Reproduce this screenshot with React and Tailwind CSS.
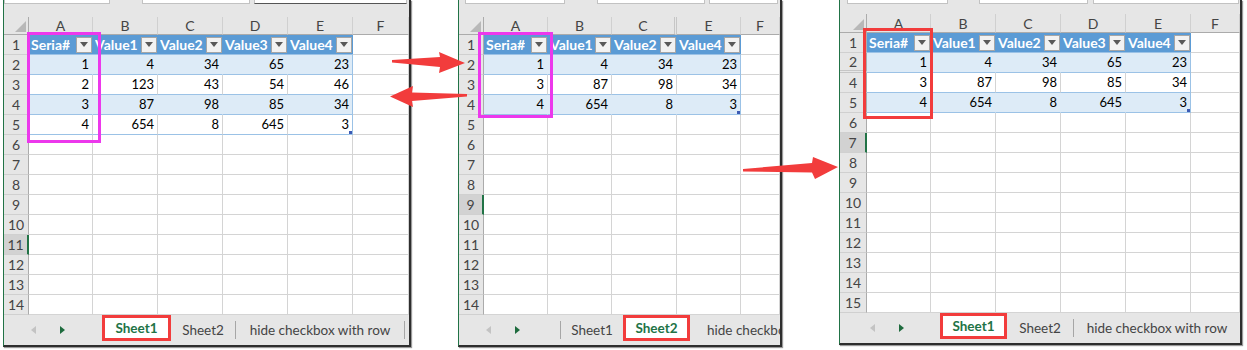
import React from 'react';

const P1 = {
  rh: 'w-[25px]',
  cols: [
    { l: 'A', w: 'w-[64px]' },
    { l: 'B', w: 'w-[65px]' },
    { l: 'C', w: 'w-[65px]' },
    { l: 'D', w: 'w-[65px]' },
    { l: 'E', w: 'w-[65px]' },
    { l: 'F', w: 'flex-1' },
  ],
  heads: ['Seria#', 'Value1', 'Value2', 'Value3', 'Value4'],
  data: [
    [1, 4, 34, 65, 23],
    [2, 123, 43, 54, 46],
    [3, 87, 98, 85, 34],
    [4, 654, 8, 645, 3],
  ],
  rows: [1, 2, 3, 4, 5, 6, 7, 8, 9, 10, 11, 12, 13, 14],
  active: 11,
};

const P2 = {
  rh: 'w-[25px]',
  cols: [
    { l: 'A', w: 'w-[64px]' },
    { l: 'B', w: 'w-[64px]' },
    { l: 'C', w: 'w-[65px]', hid: true },
    { l: 'E', w: 'w-[64px]' },
    { l: 'F', w: 'flex-1' },
  ],
  heads: ['Seria#', 'Value1', 'Value2', 'Value4'],
  data: [
    [1, 4, 34, 23],
    [3, 87, 98, 34],
    [4, 654, 8, 3],
  ],
  rows: [1, 2, 3, 4, 5, 6, 7, 8, 9, 10, 11, 12, 13, 14],
  active: 9,
};

const P3 = {
  rh: 'w-[27px]',
  cols: [
    { l: 'A', w: 'w-[64px]' },
    { l: 'B', w: 'w-[65px]' },
    { l: 'C', w: 'w-[65px]' },
    { l: 'D', w: 'w-[65px]' },
    { l: 'E', w: 'w-[65px]' },
    { l: 'F', w: 'flex-1' },
  ],
  heads: ['Seria#', 'Value1', 'Value2', 'Value3', 'Value4'],
  data: [
    [1, 4, 34, 65, 23],
    [3, 87, 98, 85, 34],
    [4, 654, 8, 645, 3],
  ],
  rows: [1, 2, 4, 5, 6, 7, 8, 9, 10, 11, 12, 13, 14, 15],
  active: 7,
  hiddenAfter: 2,
};

const Filter = () => (
  <span className="mr-[1px] ml-auto flex h-[16px] w-[16px] shrink-0 items-center justify-center border border-[#a6a6a6] bg-[#f2f2f2]">
    <svg width="8" height="5" viewBox="0 0 8 5">
      <path d="M0 0h8L4 5z" fill="#595959" />
    </svg>
  </span>
);

const Corner = ({ w, h }) => (
  <div className={`relative shrink-0 border-r border-b border-[#ababab] bg-[#e6e6e6] ${w} ${h}`}>
    <svg className="absolute right-[2px] bottom-[2px]" width="11" height="11" viewBox="0 0 11 11">
      <path d="M11 0V11H0z" fill="#b8b8b8" />
    </svg>
  </div>
);

const Sheet = ({ p, headH }) => (
  <div className="flex flex-col">
    {/* column letters */}
    <div className={`flex ${headH}`}>
      <Corner w={p.rh} h={headH} />
      {p.cols.map((c) => (
        <div
          key={c.l}
          className={`flex items-center justify-center border-b border-[#ababab] bg-[#e6e6e6] text-[14px] text-[#444] ${c.w} ${
            c.hid ? 'border-r-[3px] border-r-[#c6c6c6] border-double' : 'border-r border-r-[#d0d0d0]'
          }`}
        >
          {c.l}
        </div>
      ))}
    </div>
    {p.rows.map((n, i) => {
      const head = i === 0;
      const rec = i >= 1 && i <= p.data.length ? p.data[i - 1] : null;
      const band = rec && i % 2 === 1;
      const last = i === p.data.length;
      return (
        <div key={n} className="flex h-[20px]">
          <div
            className={`flex shrink-0 items-center justify-center text-[14px] text-[#444] ${p.rh} ${
              n === p.active
                ? 'border-r-2 border-r-[#217346] bg-[#d2d2d2]'
                : 'border-r border-r-[#ababab] bg-[#e6e6e6]'
            } ${
              p.hiddenAfter === n ? 'border-b-[3px] border-double border-b-[#c6c6c6]' : 'border-b border-b-[#d0d0d0]'
            }`}
          >
            {n}
          </div>
          {p.cols.map((c, j) => {
            const inTable = j < p.heads.length && (head || rec);
            if (head && inTable) {
              return (
                <div
                  key={c.l}
                  className={`flex min-w-0 items-center border-b border-b-[#9bc2e6] bg-[#5b9bd5] pl-[2px] text-[14px] font-bold text-white ${c.w}`}
                >
                  <span className="min-w-0 overflow-hidden whitespace-nowrap">{p.heads[j]}</span>
                  <Filter />
                </div>
              );
            }
            if (inTable) {
              const lastCol = j === p.heads.length - 1;
              return (
                <div
                  key={c.l}
                  className={`relative flex items-center justify-end border-b border-b-[#9bc2e6] pr-[3px] text-[13px] text-black ${c.w} ${
                    band ? 'bg-[#ddebf7]' : 'bg-white'
                  } ${
                    lastCol
                      ? 'border-r border-r-[#9bc2e6]'
                      : band
                        ? 'border-r border-r-[#ddebf7]'
                        : 'border-r border-r-[#d4d4d4]'
                  }`}
                >
                  {rec[j]}
                  {last && lastCol && (
                    <span className="absolute right-0 bottom-0 h-[3px] w-[3px] bg-[#3c5ab4]" />
                  )}
                </div>
              );
            }
            return (
              <div key={c.l} className={`border-r border-b border-[#d4d4d4] bg-white ${c.w}`} />
            );
          })}
        </div>
      );
    })}
  </div>
);

const Nav = ({ w, pl }) => (
  <div className={`flex shrink-0 items-center gap-[24px] ${w} ${pl}`}>
    <svg width="5" height="8" viewBox="0 0 5 8">
      <path d="M5 0V8L0 4z" fill="#c3c3c3" />
    </svg>
    <svg width="5" height="8" viewBox="0 0 5 8">
      <path d="M0 0V8L5 4z" fill="#1e6b3e" />
    </svg>
  </div>
);

const Active = ({ w, children }) => (
  <div
    className={`flex h-[26px] shrink-0 items-center justify-center self-start border-[3px] border-[#f23c3c] bg-white text-[13.5px] font-bold text-[#217346] ${w}`}
  >
    {children}
  </div>
);

const Tab = ({ w, children }) => (
  <div className={`flex shrink-0 items-center justify-center whitespace-nowrap text-[13.5px] text-[#444] ${w}`}>
    {children}
  </div>
);

const Sep = () => <div className="h-[18px] w-px shrink-0 bg-[#a6a6a6]" />;

const TopStrip = ({ h, children }) => (
  <div className={`flex items-start overflow-hidden bg-[#e6e6e6] ${h}`}>{children}</div>
);

const Box = ({ cls }) => <div className={`h-[4px] shrink-0 border-x border-b border-[#c2c2c2] bg-white ${cls}`} />;

export default function App() {
  return (
    <div className="relative flex h-[350px] w-[1247px] items-start overflow-hidden bg-white [font-family:Lato,sans-serif]">
      {/* panel 1 */}
      <div className="relative ml-[3px] flex w-[408px] shrink-0 flex-col border-b-2 border-l border-r-2 border-b-[#2e2e2e] border-l-[#217346] border-r-[#2e2e2e] shadow-[1px_1px_1px_#9a9a9a]">
        <TopStrip h="h-[17px]">
          <Box cls="w-[106px]" />
          <Box cls="ml-[32px] w-[108px]" />
          <Box cls="ml-[4px] w-[153px] border-b-[#555]" />
        </TopStrip>
        <Sheet p={P1} headH="h-[18px]" />
        <div className="flex h-[30px] items-center bg-[#e6e6e6]">
          <Nav w="w-[98px]" pl="pl-[27px]" />
          <Active w="w-[69px]">Sheet1</Active>
          <Tab w="w-[64px]">Sheet2</Tab>
          <Sep />
          <Tab w="w-[168px]">hide checkbox with row</Tab>
          <Sep />
        </div>
        <div className="absolute top-[32px] left-[23px] h-[111px] w-[74px] border-[3px] border-[#ec38ec]" />
      </div>

      {/* panel 2 */}
      <div className="relative ml-[47px] flex w-[324px] shrink-0 flex-col border-b-2 border-l border-r-2 border-b-[#2e2e2e] border-l-[#217346] border-r-[#2e2e2e] shadow-[1px_1px_1px_#9a9a9a]">
        <TopStrip h="h-[17px]">
          <Box cls="ml-[6px] w-[100px]" />
          <Box cls="ml-[32px] w-[108px]" />
          <Box cls="ml-[4px] w-[69px]" />
        </TopStrip>
        <Sheet p={P2} headH="h-[18px]" />
        <div className="flex h-[30px] items-center overflow-hidden bg-[#e6e6e6]">
          <Nav w="w-[101px]" pl="pl-[27px]" />
          <Sep />
          <Tab w="w-[62px]">Sheet1</Tab>
          <Active w="w-[67px]">Sheet2</Active>
          <div className="shrink-0 whitespace-nowrap pl-[17px] text-[13.5px] text-[#444]">hide checkbox with row</div>
        </div>
        <div className="absolute top-[32px] left-[19px] h-[86px] w-[75px] border-[3px] border-[#ec38ec]" />
      </div>

      {/* panel 3 */}
      <div className="relative ml-[57px] flex w-[403px] shrink-0 flex-col border-b-2 border-l border-r-2 border-b-[#2e2e2e] border-l-[#217346] border-r-[#2e2e2e] shadow-[1px_1px_1px_#9a9a9a]">
        <TopStrip h="h-[14px]">
          <Box cls="ml-[7px] w-[101px] h-[3px]" />
          <Box cls="ml-[31px] w-[109px] h-[3px]" />
          <Box cls="ml-[5px] w-[146px] h-[3px]" />
        </TopStrip>
        <Sheet p={P3} headH="h-[19px]" />
        <div className="flex h-[30px] items-center bg-[#e6e6e6]">
          <Nav w="w-[100px]" pl="pl-[30px]" />
          <Active w="w-[67px]">Sheet1</Active>
          <Tab w="w-[66px]">Sheet2</Tab>
          <Sep />
          <Tab w="w-[166px]">hide checkbox with row</Tab>
        </div>
        <div className="absolute top-[28px] left-[23px] h-[91px] w-[70px] border-[3px] border-[#f23c3c]" />
      </div>

      {/* arrows */}
      <svg className="pointer-events-none absolute inset-0" width="1247" height="350" viewBox="0 0 1247 350">
        <path d="M392 60 L440 57 L439 52 L465 63 L439 73 L440 67 L392 62.5 Z" fill="#f23c3c" />
        <path d="M390 96.5 L413 86 L412 92.5 L467 94 L467 96.5 L412 101 L413 107 Z" fill="#f23c3c" />
        <path d="M743 169 L812 163 L813 157 L838 167 L815 179 L812 172.5 L743 171.5 Z" fill="#f23c3c" />
      </svg>
    </div>
  );
}
